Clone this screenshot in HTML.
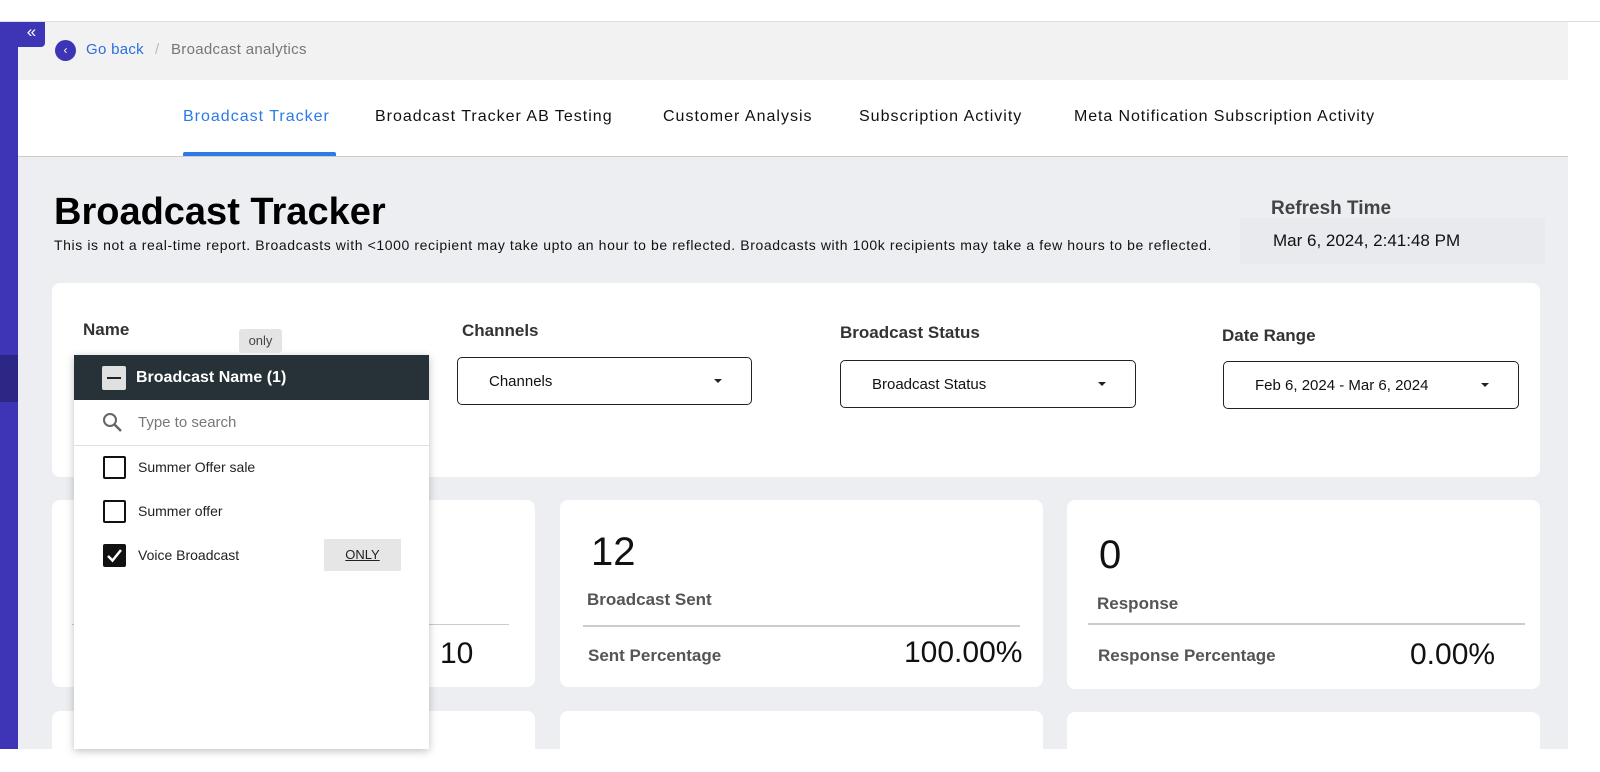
<!DOCTYPE html>
<html><head><meta charset="utf-8"><style>
*{box-sizing:border-box;margin:0;padding:0}
body{width:1600px;height:749px;overflow:hidden;background:#fff;font-family:"Liberation Sans",Arial,sans-serif;position:relative}
.abs{position:absolute}
.card{position:absolute;background:#fff;border-radius:8px}
.lbl{position:absolute;font-size:17px;font-weight:bold;color:#333}
.sel{position:absolute;border:1.5px solid #222;border-radius:5px;background:#fff;font-size:15px;color:#111;padding-left:31px;display:flex;align-items:center}
.sel:after{content:"";position:absolute;right:29px;top:50%;margin-top:-2px;border-left:4px solid transparent;border-right:4px solid transparent;border-top:4px solid #222}
.big{position:absolute;font-size:40px;color:#111}
.t2{position:absolute;font-size:17px;font-weight:bold;color:#555}
.hr{position:absolute;height:2px;background:#ccc}
.cb{position:absolute;width:23px;height:23px;border:2px solid #111;border-radius:2px;background:#fff}
.it{position:absolute;font-size:14px;color:#222}
.tab{position:absolute;top:108px;font-size:16px;color:#111;letter-spacing:1px;white-space:nowrap}
</style></head><body>
<div class="abs" style="left:0;top:0;width:1600px;height:22px;background:#fff;border-bottom:1px solid #ddd"></div>
<div class="abs" style="left:18px;top:22px;width:1550px;height:58px;background:#f2f2f2"></div>
<div class="abs" style="left:1568px;top:22px;width:32px;height:727px;background:#fff"></div>
<div class="abs" style="left:0;top:22px;width:18px;height:727px;background:#3d35b5"></div>
<div class="abs" style="left:0;top:355px;width:18px;height:47px;background:#2c2685"></div>
<div class="abs" style="left:18px;top:22px;width:27px;height:25px;background:#3d35b5;border-radius:0 0 4px 0;color:#fff;font-size:17px;line-height:20px;text-align:center">«</div>
<div class="abs" style="left:55px;top:40px;width:21px;height:21px;border-radius:50%;background:#3d35b5;color:#fff;font-size:12px;line-height:21px;text-align:center">‹</div>
<div class="abs" style="left:86px;top:41px;font-size:15px;color:#2a6fe0;letter-spacing:0.3px">Go back</div>
<div class="abs" style="left:155px;top:41px;font-size:15px;color:#bbb">/</div>
<div class="abs" style="left:171px;top:41px;font-size:15px;color:#777;letter-spacing:0.3px">Broadcast analytics</div>
<div class="abs" style="left:18px;top:80px;width:1550px;height:77px;background:#fff;border-bottom:1px solid #ccc"></div>
<div class="tab" style="left:183px;color:#2a7ae8">Broadcast Tracker</div>
<div class="abs" style="left:183px;top:152px;width:153px;height:4px;background:#2a7ae8;border-radius:2px 2px 0 0"></div>
<div class="tab" style="left:375px">Broadcast Tracker AB Testing</div>
<div class="tab" style="left:663px">Customer Analysis</div>
<div class="tab" style="left:859px">Subscription Activity</div>
<div class="tab" style="left:1074px;letter-spacing:0.9px">Meta Notification Subscription Activity</div>
<div class="abs" style="left:18px;top:157px;width:1550px;height:592px;background:#eceef1"></div>
<div class="abs" style="left:54px;top:191px;font-size:38px;font-weight:bold;color:#000">Broadcast Tracker</div>
<div class="abs" style="left:54px;top:237px;font-size:14px;color:#111;letter-spacing:0.6px;white-space:nowrap">This is not a real-time report. Broadcasts with &lt;1000 recipient may take upto an hour to be reflected. Broadcasts with 100k recipients may take a few hours to be reflected.</div>
<div class="abs" style="left:1240px;top:218px;width:305px;height:46px;background:#e8eaed"></div>
<div class="abs" style="left:1271px;top:198px;font-size:19px;font-weight:bold;color:#444">Refresh Time</div>
<div class="abs" style="left:1273px;top:231px;font-size:17px;color:#111">Mar 6, 2024, 2:41:48 PM</div>
<div class="card" style="left:52px;top:283px;width:1488px;height:194px"></div>
<div class="lbl" style="left:83px;top:320px">Name</div>
<div class="lbl" style="left:462px;top:321px">Channels</div>
<div class="lbl" style="left:840px;top:323px">Broadcast Status</div>
<div class="lbl" style="left:1222px;top:326px">Date Range</div>
<div class="sel" style="left:457px;top:357px;width:295px;height:48px">Channels</div>
<div class="sel" style="left:840px;top:360px;width:296px;height:48px">Broadcast Status</div>
<div class="sel" style="left:1223px;top:361px;width:296px;height:48px">Feb 6, 2024 - Mar 6, 2024</div>
<div class="card" style="left:52px;top:500px;width:483px;height:187px"></div>
<div class="card" style="left:560px;top:500px;width:483px;height:187px"></div>
<div class="card" style="left:1067px;top:500px;width:473px;height:189px"></div>
<div class="card" style="left:52px;top:711px;width:483px;height:60px"></div>
<div class="card" style="left:560px;top:711px;width:483px;height:60px"></div>
<div class="card" style="left:1067px;top:712px;width:473px;height:60px"></div>
<div class="hr" style="left:72px;top:624px;width:437px;height:1px"></div>
<div class="big" style="left:440px;top:637px;font-size:30px">10</div>
<div class="big" style="left:591px;top:530px">12</div>
<div class="t2" style="left:587px;top:590px">Broadcast Sent</div>
<div class="hr" style="left:583px;top:625px;width:437px"></div>
<div class="t2" style="left:588px;top:646px">Sent Percentage</div>
<div class="big" style="left:904px;top:636px;font-size:30px">100.00%</div>
<div class="big" style="left:1099px;top:533px">0</div>
<div class="t2" style="left:1097px;top:594px">Response</div>
<div class="hr" style="left:1088px;top:623px;width:437px"></div>
<div class="t2" style="left:1098px;top:646px">Response Percentage</div>
<div class="big" style="left:1410px;top:638px;font-size:30px">0.00%</div>
<div class="abs" style="left:74px;top:355px;width:355px;height:394px;background:#fff;box-shadow:0 2px 8px rgba(0,0,0,.25)"></div>
<div class="abs" style="left:74px;top:355px;width:355px;height:45px;background:#263238"></div>
<div class="abs" style="left:102px;top:366px;width:24px;height:24px;background:#e0e0e0;border-radius:2px"><div style="position:absolute;left:5px;top:11px;width:14px;height:2px;background:#222"></div></div>
<div class="abs" style="left:136px;top:369px;font-size:16px;font-weight:bold;color:#fff">Broadcast Name (1)</div>
<div class="abs" style="left:239px;top:329px;width:43px;height:24px;background:#e4e4e4;border-radius:3px;font-size:13px;color:#444;text-align:center;line-height:24px">only</div>
<svg class="abs" style="left:101px;top:411px" width="24" height="24" viewBox="0 0 24 24"><circle cx="9" cy="9" r="6" fill="none" stroke="#666" stroke-width="2"/><line x1="13.5" y1="13.5" x2="20" y2="20" stroke="#666" stroke-width="2.5"/></svg>
<div class="abs" style="left:138px;top:414px;font-size:15px;color:#777">Type to search</div>
<div class="abs" style="left:74px;top:445px;width:355px;height:1px;background:#e0e0e0"></div>
<div class="cb" style="left:103px;top:456px"></div>
<div class="it" style="left:138px;top:459px">Summer Offer sale</div>
<div class="cb" style="left:103px;top:500px"></div>
<div class="it" style="left:138px;top:503px">Summer offer</div>
<div class="cb" style="left:103px;top:544px;background:#111"><svg width="19" height="19" viewBox="0 0 19 19" style="position:absolute;left:0;top:0"><path d="M3 10 L7.5 14.5 L16 4" fill="none" stroke="#fff" stroke-width="2.5"/></svg></div>
<div class="it" style="left:138px;top:547px">Voice Broadcast</div>
<div class="abs" style="left:324px;top:539px;width:77px;height:32px;background:#e6e6e6;font-size:13px;color:#222;text-decoration:underline;text-align:center;line-height:32px">ONLY</div>
</body></html>
